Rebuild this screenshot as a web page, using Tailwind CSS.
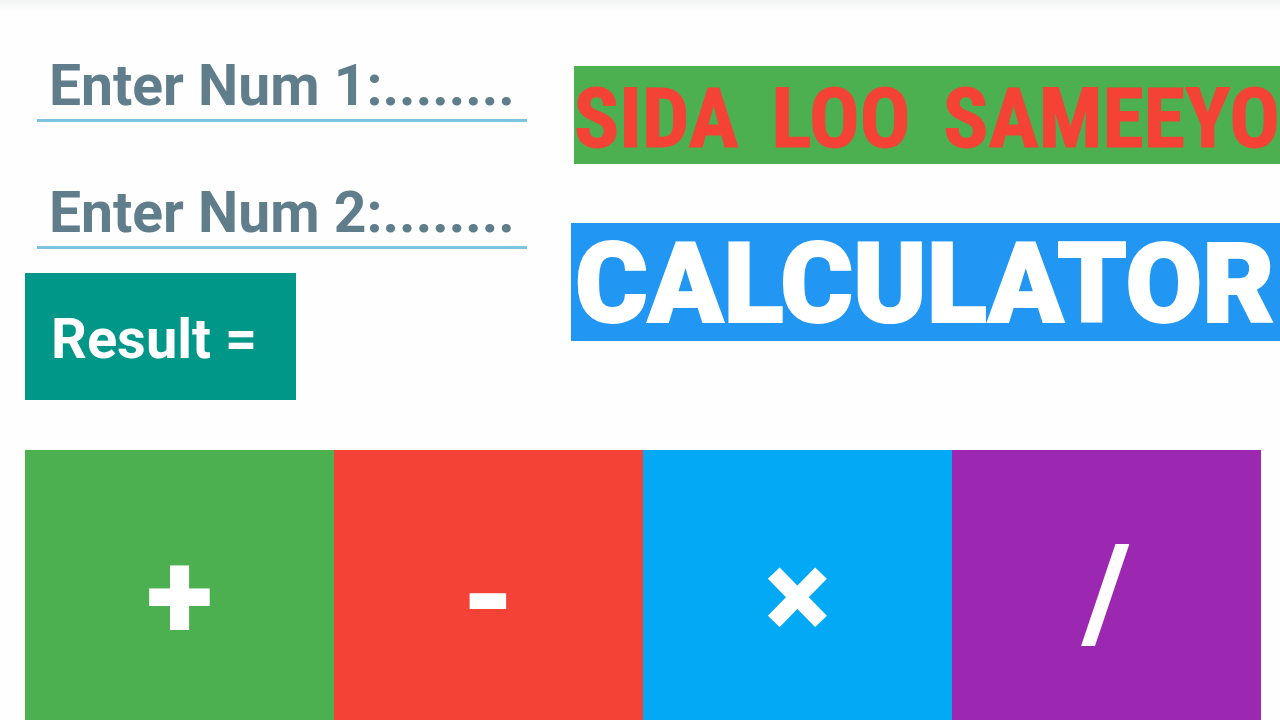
<!DOCTYPE html>
<html lang="so">
<head>
<meta charset="utf-8">
<meta name="viewport" content="width=device-width, initial-scale=1">
<title>Calculator</title>
<script src="https://cdn.jsdelivr.net/npm/@tailwindcss/browser@4"></script>
</head>
<body class="bg-[#fefefe] font-['Roboto',sans-serif] font-bold">
<main class="flex min-h-screen flex-col">
  <div class="h-3 bg-linear-to-b from-[#f2f4f4] to-[#fefefe]"></div>
  <div class="grid grid-cols-[571px_1fr]">
    <form class="flex flex-col items-start pt-10 pl-[25px]">
      <input id="num1" aria-label="Enter Num 1" placeholder="Enter Num 1:........" class="ml-3 h-[70px] w-[490px] border-b-3 border-[#7cc4de] px-3 text-[57px] outline-none placeholder:text-[#607d8b]">
      <input id="num2" aria-label="Enter Num 2" placeholder="Enter Num 2:........" class="mt-[57px] ml-3 h-[70px] w-[490px] border-b-3 border-[#7cc4de] px-3 text-[57px] outline-none placeholder:text-[#607d8b]">
      <output for="num1 num2" class="mt-6 flex h-[127px] w-[271px] items-center bg-[#009688] pt-1 pl-[26px] text-[56px] whitespace-nowrap text-white">Result =</output>
    </form>
    <div class="flex flex-col pt-[54px]">
      <h2 class="ml-[3px] flex h-[98px] items-center justify-between bg-[#4caf50] pt-2 font-['Roboto_Condensed','Liberation_Sans_Narrow',sans-serif] text-[84px] leading-none text-[#f44336] [-webkit-text-stroke:1px_#f44336]"><span>SIDA</span> <span>LOO</span> <span>SAMEEYO</span></h2>
      <h1 class="mt-[59px] flex h-[118px] items-center bg-[#2196f3] pt-1 pl-1 text-[111px] leading-none font-black text-white [-webkit-text-stroke:2px_white]">CALCULATOR</h1>
    </div>
  </div>
  <div class="mt-[50px] mr-[19px] ml-[25px] grid flex-1 grid-cols-4 text-[124px] leading-none font-black text-white">
    <button type="button" aria-label="Add" class="bg-[#4caf50] pt-6">+</button>
    <button type="button" aria-label="Subtract" class="bg-[#f44336] pt-6">-</button>
    <button type="button" aria-label="Multiply" class="bg-[#03a9f4] pt-6">×</button>
    <button type="button" aria-label="Divide" class="bg-[#9c27b0] pt-4 text-[132px] font-bold">/</button>
  </div>
</main>
</body>
</html>
